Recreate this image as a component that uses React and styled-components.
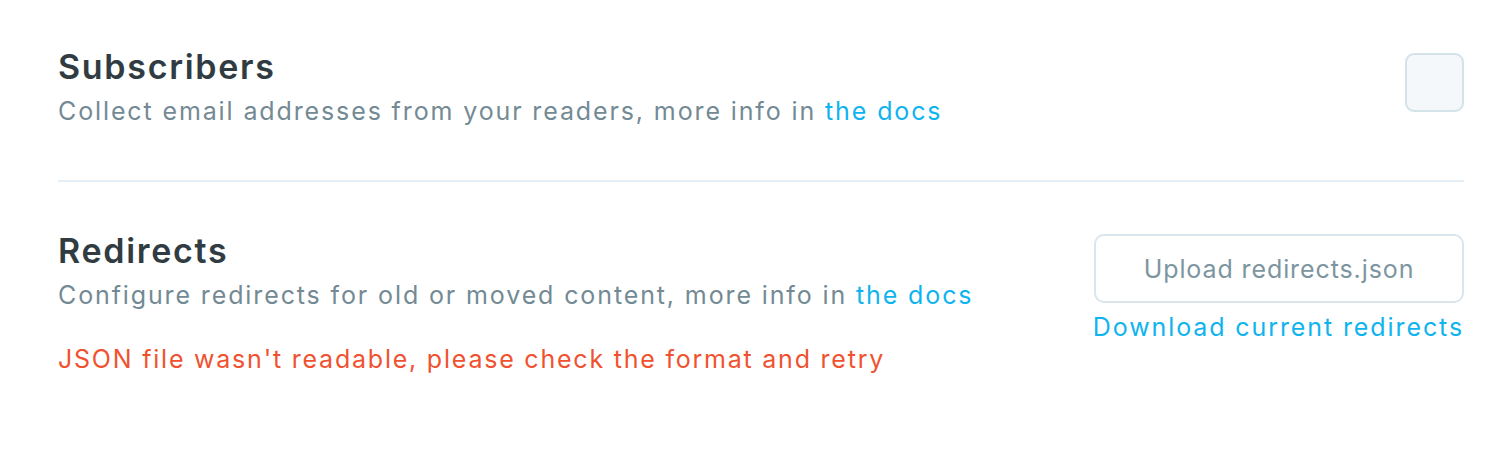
import React from "react";
import styled, { createGlobalStyle } from "styled-components";

const Global = createGlobalStyle`
  html, body { margin: 0; padding: 0; background: #ffffff; }
  body { font-family: Inter, "Noto Sans", sans-serif; -webkit-font-smoothing: antialiased; }
`;

const Page = styled.div`
  padding: 0 44px 0 58px;
`;

const Section = styled.section`
  display: flex;
  justify-content: space-between;
  align-items: flex-start;
  padding: ${(p) => p.$pad};
  border-bottom: ${(p) => (p.$divider ? "2px solid #e5eff5" : "none")};
`;

const Info = styled.div`
  display: flex;
  flex-direction: column;
`;

const Title = styled.h4`
  margin: 0;
  font-size: 34px;
  line-height: 44px;
  font-weight: 600;
  letter-spacing: 1.7px;
  color: #303c42;
`;

const Desc = styled.p`
  margin: 4px 0 0;
  font-size: 25px;
  line-height: 36px;
  letter-spacing: 1.88px;
  color: #738a94;
`;

const Link = styled.a`
  color: #0fb4ef;
  text-decoration: none;
`;

const Error = styled.p`
  margin: 28px 0 0;
  font-size: 25px;
  line-height: 36px;
  letter-spacing: 1.78px;
  color: #f05230;
`;

const Checkbox = styled.span`
  display: block;
  box-sizing: border-box;
  width: 59px;
  height: 59px;
  margin-top: 8px;
  border: 2px solid #d4e3ea;
  border-radius: 9px;
  background: #f4f8fb;
`;

const Actions = styled.div`
  display: flex;
  flex-direction: column;
  align-items: flex-end;
  margin-top: 5px;
`;

const Button = styled.button`
  box-sizing: border-box;
  width: 370px;
  height: 69px;
  border: 2px solid #dae5ec;
  border-radius: 10px;
  background: #ffffff;
  color: #7d959f;
  font-family: Inter, "Noto Sans", sans-serif;
  font-size: 25px;
  letter-spacing: 0.9px;
  padding: 0;
`;

const Download = styled.a`
  margin-top: 6px;
  font-size: 25px;
  line-height: 36px;
  letter-spacing: 1.9px;
  color: #0fb4ef;
  text-decoration: none;
`;

export default function App() {
  return (
    <Page>
      <Global />
      <Section $pad="45px 0 51px" $divider>
        <Info>
          <Title>Subscribers</Title>
          <Desc>
            Collect email addresses from your readers, more info in{" "}
            <Link href="#">the docs</Link>
          </Desc>
        </Info>
        <Checkbox />
      </Section>
      <Section $pad="47px 0 60px">
        <Info>
          <Title>Redirects</Title>
          <Desc>
            Configure redirects for old or moved content, more info in{" "}
            <Link href="#">the docs</Link>
          </Desc>
          <Error>JSON file wasn't readable, please check the format and retry</Error>
        </Info>
        <Actions>
          <Button>Upload redirects.json</Button>
          <Download href="#">Download current redirects</Download>
        </Actions>
      </Section>
    </Page>
  );
}
